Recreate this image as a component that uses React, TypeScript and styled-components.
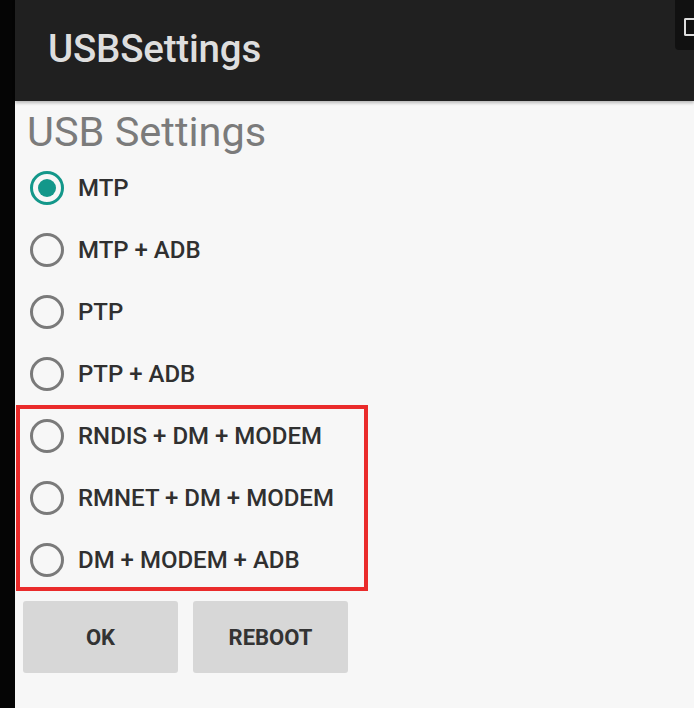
import { useState } from 'react'
import styled, { createGlobalStyle } from 'styled-components'

const GlobalStyle = createGlobalStyle`
  html, body {
    margin: 0;
    padding: 0;
    background: #000;
  }
  body {
    font-family: Roboto, "Liberation Sans", sans-serif;
  }
`

const Screen = styled.div`
  display: flex;
  width: 694px;
  height: 708px;
  overflow: hidden;
  background: #000;
`

const Bezel = styled.div`
  width: 15px;
  flex-shrink: 0;
  background: #050505;
`

const Main = styled.div`
  flex: 1;
  display: flex;
  flex-direction: column;
  background: #f7f7f7;
`

const AppBar = styled.header`
  height: 101px;
  display: flex;
  align-items: center;
  background: #202020;
  box-shadow: 0 2px 3px rgba(0, 0, 0, 0.25);
  padding-left: 33px;
  box-sizing: border-box;
`

const AppTitle = styled.h1`
  margin: 0 0 4px;
  font-size: 38.5px;
  font-weight: 500;
  color: #dedede;
  letter-spacing: -0.2px;
`

const Corner = styled.div`
  margin-left: auto;
  align-self: flex-start;
  width: 19px;
  height: 50px;
  background: #111;
  border-bottom-left-radius: 4px;
  display: flex;
  align-items: center;
  justify-content: flex-end;
`

const CornerGlyph = styled.div`
  width: 8px;
  height: 14px;
  border: 2px solid #ddd;
  border-right: none;
  border-radius: 2px 0 0 2px;
  margin-top: 4px;
`

const DialogTitle = styled.h2`
  margin: 0;
  padding: 8px 0 0 12px;
  height: 56px;
  box-sizing: border-box;
  font-size: 41.5px;
  font-weight: 400;
  color: #7b7b7b;
  line-height: 46px;
`

const Group = styled.div<{ $marked?: boolean }>`
  width: 352px;
  margin-left: 1px;
  box-shadow: ${({ $marked }) => ($marked ? 'inset 0 0 0 4px #ea2b2b' : 'none')};
`

const Row = styled.label`
  height: 62px;
  display: flex;
  align-items: center;
  gap: 14px;
  padding-left: 14px;
  cursor: pointer;
`

const Circle = styled.span<{ $checked: boolean }>`
  width: 34px;
  height: 34px;
  box-sizing: border-box;
  border-radius: 50%;
  border: 3px solid ${({ $checked }) => ($checked ? '#13978a' : '#7a7a7a')};
  display: flex;
  align-items: center;
  justify-content: center;
  flex-shrink: 0;

  &::after {
    content: '';
    width: 18px;
    height: 18px;
    border-radius: 50%;
    background: #13978a;
    display: ${({ $checked }) => ($checked ? 'block' : 'none')};
  }
`

const RowText = styled.span`
  font-size: 24px;
  font-weight: 500;
  color: #303030;
`

const Buttons = styled.div`
  display: flex;
  gap: 15px;
  padding: 10px 0 0 8px;
`

const Button = styled.button`
  width: 155px;
  height: 72px;
  border: none;
  border-radius: 3px;
  background: #d7d7d7;
  font-family: Roboto, "Liberation Sans", sans-serif;
  font-size: 22px;
  font-weight: 700;
  color: #333;
  cursor: pointer;
`

const modes = [
  'MTP',
  'MTP + ADB',
  'PTP',
  'PTP + ADB',
  'RNDIS + DM + MODEM',
  'RMNET + DM + MODEM',
  'DM + MODEM + ADB',
]

export default function App() {
  const [selected, setSelected] = useState('MTP')

  const renderRow = (mode: string) => (
    <Row key={mode} onClick={() => setSelected(mode)}>
      <Circle $checked={selected === mode} />
      <RowText>{mode}</RowText>
    </Row>
  )

  return (
    <>
      <GlobalStyle />
      <Screen>
        <Bezel />
        <Main>
          <AppBar>
            <AppTitle>USBSettings</AppTitle>
            <Corner>
              <CornerGlyph />
            </Corner>
          </AppBar>
          <DialogTitle>USB Settings</DialogTitle>
          <Group>{modes.slice(0, 4).map(renderRow)}</Group>
          <Group $marked>{modes.slice(4).map(renderRow)}</Group>
          <Buttons>
            <Button>OK</Button>
            <Button>REBOOT</Button>
          </Buttons>
        </Main>
      </Screen>
    </>
  )
}
